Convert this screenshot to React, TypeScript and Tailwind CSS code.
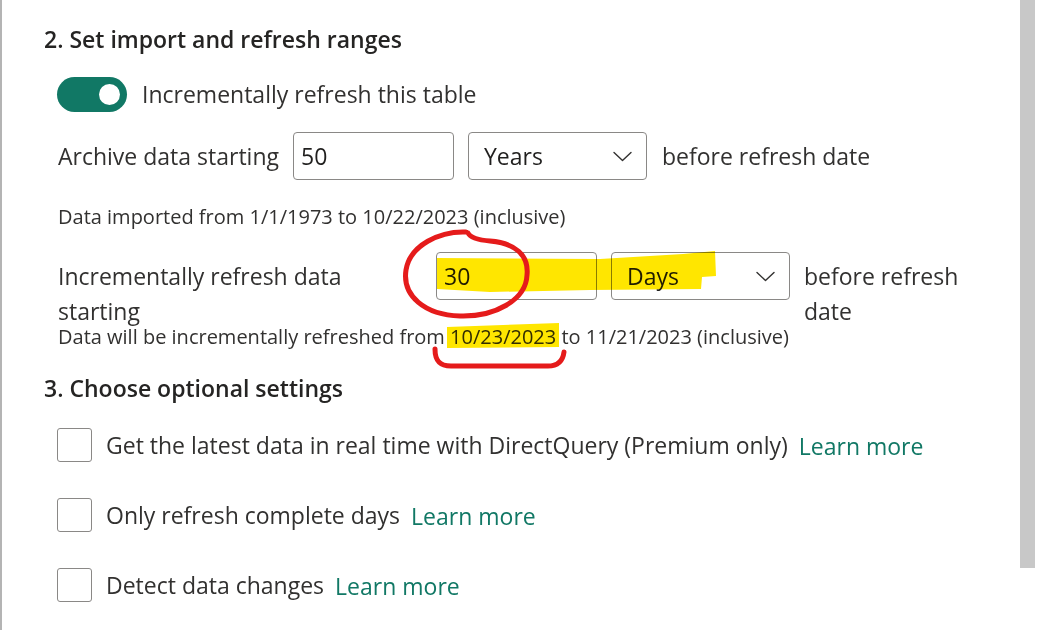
const font = { fontFamily: '"Open Sans", "Noto Sans", sans-serif' };

function Chevron() {
  return (
    <svg width="19" height="11" viewBox="0 0 19 11" fill="none" stroke="#323130" strokeWidth="1.4" strokeLinecap="round" strokeLinejoin="round">
      <path d="M1 1.5 L9.5 9.5 L18 1.5" />
    </svg>
  );
}

function TextInput({ value }: { value: string }) {
  return (
    <div className="w-[161px] h-[48px] shrink-0 border border-[#8a8886] rounded-[4px] flex items-center pl-[7px] text-[23px] text-[#201f1e]">
      {value}
    </div>
  );
}

function Select({ value }: { value: string }) {
  return (
    <div className="w-[179px] h-[48px] shrink-0 border border-[#8a8886] rounded-[4px] flex items-center justify-between pl-[15px] pr-[14px] text-[23px] text-[#201f1e]">
      <span>{value}</span>
      <Chevron />
    </div>
  );
}

function OptionRow({ label, first }: { label: string; first?: boolean }) {
  return (
    <div className={`flex items-center h-[34px] ${first ? 'mt-[23px]' : 'mt-[36px]'}`}>
      <div className="w-[35px] h-[34px] shrink-0 border border-[#8a8886] rounded-[3px] bg-white" />
      <span className="ml-[14px] text-[23px] text-[#323130]">{label}</span>
      <a className="ml-[11px] text-[23px] text-[#117865] mt-[3px]">Learn more</a>
    </div>
  );
}

export default function App() {
  return (
    <div className="relative w-[1044px] h-[630px] bg-white overflow-hidden flex" style={font}>
      <div className="w-[2px] h-full bg-[#b4b4b4] shrink-0" />

      <div className="flex-1 pl-[42px] pt-[22px]">
        <h2 className="h-[34px] flex items-center text-[23px] font-semibold text-[#252423]">2. Set import and refresh ranges</h2>

        <div className="mt-[21px] ml-[13px] flex items-center h-[35px]">
          <div className="w-[70px] h-[35px] rounded-full bg-[#117865] flex items-center justify-end pr-[7px]">
            <div className="w-[21px] h-[21px] rounded-full bg-white" />
          </div>
          <span className="ml-[15px] text-[23px] text-[#323130]">Incrementally refresh this table</span>
        </div>

        <div className="mt-[20px] ml-[14px] flex items-center h-[48px] gap-[14px] text-[23px] text-[#323130]">
          <span>Archive data starting</span>
          <TextInput value="50" />
          <Select value="Years" />
          <span className="ml-px">before refresh date</span>
        </div>

        <p className="mt-[25px] ml-[14px] h-[24px] flex items-center text-[20px] text-[#323130]">
          Data imported from 1/1/1973 to 10/22/2023 (inclusive)
        </p>

        <div className="mt-[23px] ml-[14px] flex items-start h-[73px] gap-[14px] text-[23px] text-[#323130]">
          <span className="w-[364px] shrink-0 pt-[7px] leading-[35px]">Incrementally refresh data starting</span>
          <TextInput value="30" />
          <Select value="Days" />
          <span className="max-w-[180px] pt-[7px] leading-[35px]">before refresh date</span>
        </div>

        <p className="ml-[14px] h-[24px] flex items-center text-[20px] text-[#323130]">
          Data will be incrementally refreshed from 10/23/2023 to 11/21/2023 (inclusive)
        </p>

        <h2 className="mt-[22px] h-[34px] flex items-center text-[23px] font-semibold text-[#252423]">3. Choose optional settings</h2>

        <div className="ml-[13px]">
          <OptionRow first label="Get the latest data in real time with DirectQuery (Premium only)" />
          <OptionRow label="Only refresh complete days" />
          <OptionRow label="Detect data changes" />
        </div>
      </div>

      <div className="w-[15px] shrink-0 mr-[9px]">
        <div className="h-[568px] bg-[#c8c8c8]" />
      </div>

      {/* highlighter + pen annotations drawn over the dialog */}
      <svg className="absolute inset-0 pointer-events-none mix-blend-multiply" width="1044" height="630">
        <path d="M437 258 L600 259 L683 254 L715 251 L716 276 L702 277 L701 289 L590 290 L490 292 L437 289 Z" fill="#ffe600" />
        <path d="M447 327 L559 323 L559 347 L447 348 Z" fill="#ffe600" />
      </svg>
      <svg className="absolute inset-0 pointer-events-none" width="1044" height="630" fill="none" stroke="#e51b1b" strokeWidth="5" strokeLinecap="round">
        <path d="M466 232 C 440 231, 410 245, 406 270 C 402 296, 425 315, 460 316 C 495 317, 526 300, 527 275 C 529 255, 515 243, 490 241 C 478 240, 470 237, 468 233" />
        <path d="M435 349 C 435 360, 439 366, 451 366 L 548 366 C 559 366, 563 360, 564 352" />
      </svg>
    </div>
  );
}
